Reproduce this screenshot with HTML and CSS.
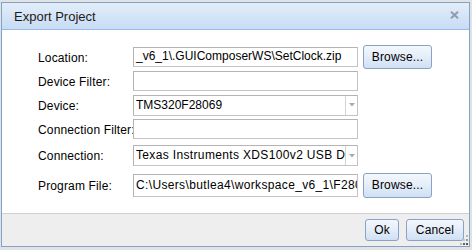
FILE: index.html
```html
<!DOCTYPE html>
<html>
<head>
<meta charset="utf-8">
<title>Export Project</title>
<link rel="stylesheet" href="styles.css">
</head>
<body>
<div class="dialog">
  <div class="titlebar">
    <span class="title">Export Project</span>
    <svg class="close" width="9" height="8" viewBox="0 0 9 8"><path d="M1 0.8 L8 7.2 M8 0.8 L1 7.2" stroke="#8f9cb0" stroke-width="2"/></svg>
  </div>
  <div class="body">
    <div class="form">
      <label class="lbl">Location:</label>
      <div class="field">_v6_1\.GUIComposerWS\SetClock.zip</div>
      <button class="btn browse">Browse...</button>

      <label class="lbl">Device Filter:</label>
      <div class="field"></div>
      <span></span>

      <label class="lbl">Device:</label>
      <div class="field select"><span class="val">TMS320F28069</span><span class="arrow"><svg width="6" height="4" viewBox="0 0 6 4"><path d="M0 0 H6 L3 3.5 Z" fill="#a3acbb"/></svg></span></div>
      <span></span>

      <label class="lbl">Connection Filter:</label>
      <div class="field"></div>
      <span></span>

      <label class="lbl">Connection:</label>
      <div class="field select"><span class="val wide">Texas Instruments XDS100v2 USB Debug Probe</span><span class="arrow"><svg width="6" height="4" viewBox="0 0 6 4"><path d="M0 0 H6 L3 3.5 Z" fill="#a3acbb"/></svg></span></div>
      <span></span>

      <label class="lbl">Program File:</label>
      <div class="field tall wide">C:\Users\butlea4\workspace_v6_1\F28069_SetClock\Debug\SetClock.out</div>
      <button class="btn browse tallbtn">Browse...</button>
    </div>
  </div>
  <div class="footer">
    <button class="btn ok">Ok</button>
    <button class="btn cancel">Cancel</button>
    <svg class="grip" width="8" height="12" viewBox="0 0 8 12">
      <rect x="6" y="1" width="2" height="2" fill="#b8b8b8"/>
      <rect x="6" y="5" width="2" height="2" fill="#9a9a9a"/>
      <rect x="3" y="5" width="2" height="2" fill="#c8c8c8"/>
      <rect x="6" y="9" width="2" height="2" fill="#555"/>
      <rect x="3" y="9" width="2" height="2" fill="#666"/>
      <rect x="0" y="9" width="2" height="2" fill="#bbb"/>
    </svg>
  </div>
</div>
</body>
</html>
```
FILE: styles.css
```css
html, body {
  margin: 0;
  padding: 0;
}
body {
  background: #e2e2e2;
  width: 472px;
  height: 250px;
  overflow: hidden;
  font-family: "Liberation Sans", Arial, sans-serif;
  font-size: 12px;
  color: #000;
}
.dialog {
  position: relative;
  margin: 2px 0 0 1px;
  width: 469px;
  height: 245px;
  box-sizing: border-box;
  border: 1px solid #7fa3cd;
  background: #fff;
  display: flex;
  flex-direction: column;
}
.titlebar {
  flex: none;
  border-bottom: 1px solid #99bbe8;
  background: linear-gradient(#e3edf9, #c7dcf4);
  display: flex;
  align-items: center;
  justify-content: space-between;
  padding: 1px 10px 0 12px;
  box-sizing: content-box;
  height: 25px;
}
.title {
  font-size: 13px;
  color: #1b1b1b;
  line-height: 25px;
}
.close {
  display: block;
  margin-top: -3px;
}
.body {
  flex: 1;
  padding: 15px 0 0 36px;
}
.form {
  display: grid;
  grid-template-columns: 95px 225px 74px;
  grid-template-rows: 24px 24px 24px 24px 29px 30px;
  align-items: center;
}
.lbl {
  white-space: nowrap;
  line-height: 14px;
  padding-top: 1px;
  letter-spacing: 0.15px;
}
.field {
  height: 20px;
  box-sizing: border-box;
  border: 1px solid #b4b4b4;
  border-color: #b4b4b4 #c4c4c4 #c4c4c4 #b4b4b4;
  background: #fff;
  padding: 0 2px;
  line-height: 17px;
  white-space: nowrap;
  overflow: hidden;
  font-size: 12px;
}
.wide {
  letter-spacing: 0.35px;
}
.field.tall {
  height: 23px;
  line-height: 20px;
}
.select {
  display: flex;
  height: 21px;
  padding: 0 0 0 2px;
  line-height: 18px;
}
.select .val {
  flex: 1;
  overflow: hidden;
  white-space: nowrap;
}
.select .arrow {
  flex: none;
  width: 11px;
  border-left: 1px solid #d4d4d4;
  display: flex;
  align-items: center;
  justify-content: center;
  background: #fff;
}
.btn {
  font-family: "Liberation Sans", Arial, sans-serif;
  font-size: 12px;
  color: #000;
  border: 1px solid #8aa2c3;
  border-radius: 3px;
  background: linear-gradient(#f3f7fc 0%, #e6eef9 45%, #cfe0f4 100%);
  padding: 0;
  margin: 0;
  line-height: 18px;
  box-sizing: border-box;
  letter-spacing: 0.15px;
}
.browse {
  height: 24px;
  width: 69px;
  margin-left: 5px;
  padding-bottom: 1px;
}
.tallbtn {
  height: 25px;
}
.footer {
  flex: none;
  border-top: 1px solid #d0d0d0;
  background: #eeeeee;
  display: flex;
  justify-content: flex-end;
  align-items: flex-start;
  gap: 7px;
  padding: 5px 5px 0 0;
  box-sizing: content-box;
  height: 27px;
}
.ok {
  width: 34px;
  height: 22px;
}
.cancel {
  width: 58px;
  height: 22px;
}
.grip {
  position: absolute;
  right: 1px;
  bottom: 0;
}
```
